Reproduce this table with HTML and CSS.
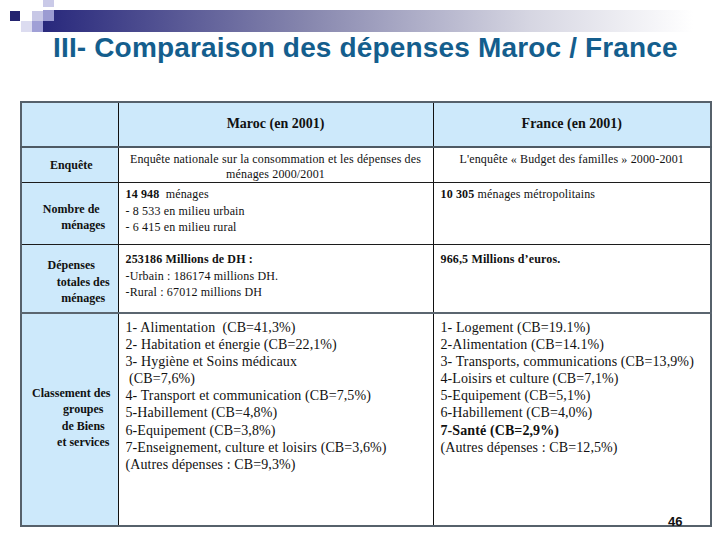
FILE: index.html
```html
<!DOCTYPE html>
<html lang="fr">
<head>
<meta charset="utf-8">
<title>Comparaison des dépenses Maroc / France</title>
<link rel="stylesheet" href="styles.css">
</head>
<body>
<header class="band">
  <svg class="logo" width="728" height="32" viewBox="0 0 728 32" aria-hidden="true">
    <defs>
      <linearGradient id="barfade" x1="0" x2="1" y1="0" y2="0">
        <stop offset="0" stop-color="#28287c"/>
        <stop offset="0.4" stop-color="#8585ad"/>
        <stop offset="0.75" stop-color="#d6d6e2"/>
        <stop offset="1" stop-color="#ffffff"/>
      </linearGradient>
    </defs>
    <rect x="43" y="10" width="650" height="22" fill="url(#barfade)"/>
    <rect x="43" y="0" width="11" height="7" fill="#cacae8"/>
    <rect x="10" y="11" width="10" height="10" fill="#23236f"/>
    <rect x="32" y="11" width="11" height="10" fill="#c8c8e6"/>
    <rect x="43" y="10" width="11" height="11" fill="#9c9cd2"/>
    <rect x="21" y="21" width="11" height="11" fill="#dcdcf0"/>
    <rect x="32" y="21" width="11" height="11" fill="#a0a0d6"/>
    <rect x="21" y="32" width="11" height="11" fill="#a9a9da"/>
  </svg>
  <h1 class="title">III- Comparaison des dépenses Maroc / France</h1>
</header>

<table class="cmp">
  <colgroup>
    <col class="c-label">
    <col class="c-maroc">
    <col class="c-france">
  </colgroup>
  <tr class="r-head">
    <th class="lab"></th>
    <th>Maroc (en 2001)</th>
    <th>France (en 2001)</th>
  </tr>
  <tr class="r-enq">
    <th class="lab">Enquête</th>
    <td class="mid">Enquête nationale sur la consommation et les dépenses des ménages 2000/2001</td>
    <td class="mid">L'enquête « Budget des familles » 2000-2001</td>
  </tr>
  <tr class="r-nb">
    <th class="lab">Nombre de<br>ménages</th>
    <td><b>14 948</b>&nbsp; ménages<br>- 8 533 en milieu urbain<br>- 6 415 en milieu rural</td>
    <td><b>10 305</b> ménages métropolitains</td>
  </tr>
  <tr class="r-dep">
    <th class="lab">Dépenses<br>totales des<br>ménages</th>
    <td><b>253186 Millions de DH :</b><br>-Urbain : 186174 millions DH.<br>-Rural : 67012 millions DH</td>
    <td><b>966,5 Millions d’euros.</b></td>
  </tr>
  <tr class="r-cls">
    <th class="lab">Classement des<br>groupes<br>de Biens<br>et services</th>
    <td class="big">1- Alimentation&nbsp; (CB=41,3%)<br>2- Habitation et énergie (CB=22,1%)<br>3- Hygiène et Soins médicaux<br>&nbsp;(CB=7,6%)<br>4- Transport et communication (CB=7,5%)<br>5-Habillement (CB=4,8%)<br>6-Equipement (CB=3,8%)<br>7-Enseignement, culture et loisirs (CB=3,6%)<br>(Autres dépenses : CB=9,3%)</td>
    <td class="big">1- Logement (CB=19.1%)<br>2-Alimentation (CB=14.1%)<br>3- Transports, communications (CB=13,9%)<br>4-Loisirs et culture (CB=7,1%)<br>5-Equipement (CB=5,1%)<br>6-Habillement (CB=4,0%)<br><b>7-Santé (CB=2,9%)</b><br>(Autres dépenses : CB=12,5%)</td>
  </tr>
</table>

<div class="pageno">46</div>
</body>
</html>
```

FILE: styles.css
```css
html, body {
  margin: 0;
  padding: 0;
  background: #ffffff;
}

body {
  position: relative;
  width: 728px;
  height: 546px;
  overflow: hidden;
  font-family: "Liberation Serif", "Times New Roman", serif;
  color: #111111;
}

.band {
  display: block;
}

.logo {
  display: block;
}

.title {
  margin: 0;
  padding-left: 53px;
  font-family: "Liberation Sans", Arial, sans-serif;
  font-weight: bold;
  font-size: 28px;
  line-height: 32px;
  letter-spacing: 0.16px;
  color: #145e8d;
  white-space: nowrap;
}

.cmp {
  margin: 37px 0 0 20px;
  width: 690px;
  table-layout: fixed;
  border-collapse: collapse;
  border: 2px solid #56616b;
}

.c-label { width: 97px; }
.c-maroc { width: 315px; }
.c-france { width: 278px; }

.cmp th,
.cmp td {
  border-left: 1px solid #111111;
  border-right: 1px solid #111111;
  border-top: 1px solid #1c1c1c;
  border-bottom: 1px solid #1c1c1c;
  padding: 3px 7px 0 7px;
  font-size: 12px;
  line-height: 16.5px;
  letter-spacing: 0.15px;
  text-align: left;
  vertical-align: top;
  font-weight: normal;
}

.cmp .lab {
  background: #cde9fb;
  font-weight: bold;
  text-align: center;
  vertical-align: middle;
  padding: 0 2px 0 29px;
  text-indent: -24px;
  line-height: 16.5px;
  letter-spacing: 0;
}

.r-head th {
  background: #cde9fb;
  font-weight: bold;
  font-size: 14px;
  text-align: center;
  vertical-align: middle;
  padding: 0;
  letter-spacing: 0;
  border-bottom: 2px solid #4e5a64;
}

.r-head th { height: 43px; }
.r-enq th, .r-enq td { height: 29px; }
.r-nb th, .r-nb td { height: 54px; }
.r-dep th, .r-dep td { height: 60px; border-bottom: 2px solid #5b6670; }
.r-cls th, .r-cls td { height: 206px; }

.r-nb .lab,
.r-dep .lab {
  padding-top: 7px;
}

.r-cls .lab {
  padding-bottom: 4px;
}

.cmp td.mid {
  text-align: center;
  line-height: 15px;
  padding-top: 4px;
}

.r-dep td {
  padding-top: 6px;
}

.cmp td.big {
  font-size: 14px;
  line-height: 17.1px;
  letter-spacing: 0.1px;
  padding-top: 5px;
}

.pageno {
  position: absolute;
  left: 668px;
  top: 514px;
  font-family: "Liberation Sans", Arial, sans-serif;
  font-weight: bold;
  font-size: 13px;
  line-height: 16px;
  color: #111111;
}
```
